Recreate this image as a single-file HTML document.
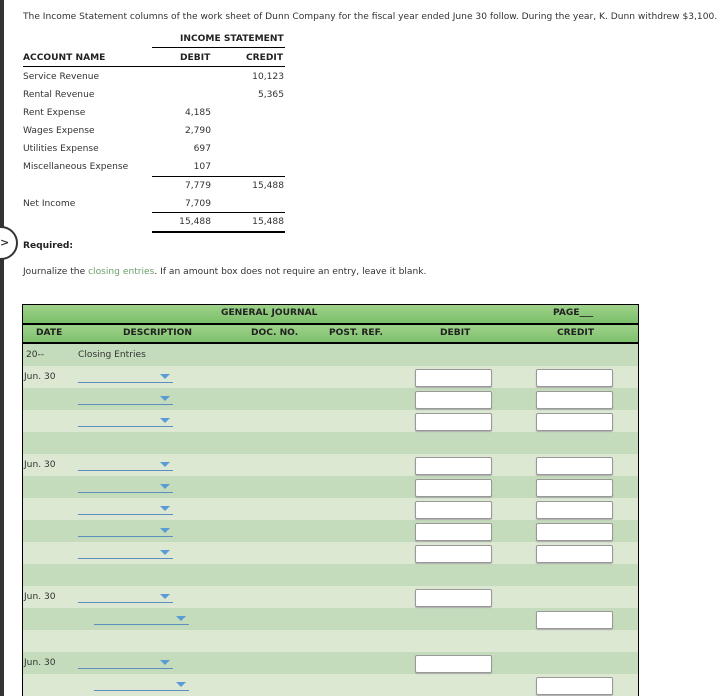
<!DOCTYPE html>
<html><head><meta charset="utf-8"><style>
*{margin:0;padding:0;box-sizing:border-box}
body{width:725px;height:696px;overflow:hidden;background:#fff;font-family:"DejaVu Sans","Liberation Sans",sans-serif;font-size:9.1px;color:#333;position:relative}
.a{position:absolute;white-space:nowrap}
.t{margin-top:2px}
.b{font-weight:bold;color:#222}
.r{text-align:right}
.ln{position:absolute;background:#000;height:1px}
.row{position:absolute;left:23px;width:615px;height:22px}
.dk{background:#c4dcbc}.lt{background:#dce8d2}
.inp{position:absolute;width:77px;height:18px;background:#fff;border:1px solid #999;border-radius:2px;box-shadow:0 1px 1px #aaa}
.dd{position:absolute;width:95px;height:12px;border-bottom:1px solid #5b8fc0}
.dd:after{content:"";position:absolute;right:3px;top:3px;border-left:5px solid transparent;border-right:5px solid transparent;border-top:5px solid #5b9bd5}
</style></head><body>
<div class="a" style="left:0;top:0;width:4px;height:696px;background:#333"></div>
<div class="a" style="left:-16px;top:226px;width:34px;height:34px;border:2px solid #333;border-radius:50%;background:#fff"></div>
<div class="a" style="left:0;top:236px;font-size:11px;color:#333;font-weight:bold">&gt;</div>

<div class="a" style="left:23px;top:12px">The Income Statement columns of the work sheet of Dunn Company for the fiscal year ended June 30 follow. During the year, K. Dunn withdrew $3,100.</div>
<div class="a b" style="left:180px;top:34px">INCOME STATEMENT</div>
<div class="ln" style="left:152px;top:47px;width:133px"></div>
<div class="a b" style="left:23px;top:53px">ACCOUNT NAME</div>
<div class="a b" style="left:180px;top:53px">DEBIT</div>
<div class="a b" style="left:246px;top:53px">CREDIT</div>
<div class="ln" style="left:23px;top:66px;width:262px"></div>
<div class="a" style="left:23px;top:72px">Service Revenue</div><div class="a r" style="left:218px;width:66px;top:72px">10,123</div>
<div class="a" style="left:23px;top:90px">Rental Revenue</div><div class="a r" style="left:218px;width:66px;top:90px">5,365</div>
<div class="a" style="left:23px;top:108px">Rent Expense</div><div class="a r" style="left:152px;width:59px;top:108px">4,185</div>
<div class="a" style="left:23px;top:126px">Wages Expense</div><div class="a r" style="left:152px;width:59px;top:126px">2,790</div>
<div class="a" style="left:23px;top:144px">Utilities Expense</div><div class="a r" style="left:152px;width:59px;top:144px">697</div>
<div class="a" style="left:23px;top:162px">Miscellaneous Expense</div><div class="a r" style="left:152px;width:59px;top:162px">107</div>
<div class="ln" style="left:152px;top:176px;width:133px"></div>
<div class="a r" style="left:152px;width:59px;top:181px">7,779</div><div class="a r" style="left:218px;width:66px;top:181px">15,488</div>
<div class="a" style="left:23px;top:199px">Net Income</div><div class="a r" style="left:152px;width:59px;top:199px">7,709</div>
<div class="ln" style="left:152px;top:212px;width:133px"></div>
<div class="a r" style="left:152px;width:59px;top:217px">15,488</div><div class="a r" style="left:218px;width:66px;top:217px">15,488</div>
<div class="ln" style="left:152px;top:231px;width:133px;height:2px"></div>

<div class="a b" style="left:23px;top:241px">Required:</div>
<div class="a" style="left:23px;top:267px">Journalize the <span style="color:#6a9f6a">closing entries</span>. If an amount box does not require an entry, leave it blank.</div>

<div class="a" style="left:22px;top:304px;width:617px;height:392px;border:1px solid #000;border-bottom:none"></div>
<div class="row" style="top:305px;height:18px;background:linear-gradient(#9ed28a,#7cc06a)"></div>
<div class="ln" style="left:23px;top:323px;width:615px;height:2px"></div>
<div class="row" style="top:325px;height:18px;background:linear-gradient(#9ed28a,#7cc06a)"></div>
<div class="ln" style="left:23px;top:342px;width:615px;height:2px"></div>
<div class="a b" style="left:221px;top:308px">GENERAL JOURNAL</div>
<div class="a b" style="left:553px;top:308px">PAGE___</div>
<div class="a b" style="left:36px;top:328px">DATE</div>
<div class="a b" style="left:123px;top:328px">DESCRIPTION</div>
<div class="a b" style="left:251px;top:328px">DOC. NO.</div>
<div class="a b" style="left:329px;top:328px">POST. REF.</div>
<div class="a b" style="left:440px;top:328px">DEBIT</div>
<div class="a b" style="left:557px;top:328px">CREDIT</div>

<div class="row dk" style="top:344px"></div>
<div class="row lt" style="top:366px"></div>
<div class="row dk" style="top:388px"></div>
<div class="row lt" style="top:410px"></div>
<div class="row dk" style="top:432px"></div>
<div class="row lt" style="top:454px"></div>
<div class="row dk" style="top:476px"></div>
<div class="row lt" style="top:498px"></div>
<div class="row dk" style="top:520px"></div>
<div class="row lt" style="top:542px"></div>
<div class="row dk" style="top:564px"></div>
<div class="row lt" style="top:586px"></div>
<div class="row dk" style="top:608px"></div>
<div class="row lt" style="top:630px"></div>
<div class="row dk" style="top:652px"></div>
<div class="row lt" style="top:674px"></div>

<div class="a" style="left:26px;top:350px">20--</div>
<div class="a" style="left:78px;top:350px">Closing Entries</div>

<div class="a" style="left:24px;top:372px">Jun. 30</div>
<div class="dd" style="left:78px;top:371px"></div>
<div class="dd" style="left:78px;top:393px"></div>
<div class="dd" style="left:78px;top:415px"></div>
<div class="inp" style="left:415px;top:369px"></div><div class="inp" style="left:536px;top:369px"></div>
<div class="inp" style="left:415px;top:391px"></div><div class="inp" style="left:536px;top:391px"></div>
<div class="inp" style="left:415px;top:413px"></div><div class="inp" style="left:536px;top:413px"></div>

<div class="a" style="left:24px;top:460px">Jun. 30</div>
<div class="dd" style="left:78px;top:459px"></div>
<div class="dd" style="left:78px;top:481px"></div>
<div class="dd" style="left:78px;top:503px"></div>
<div class="dd" style="left:78px;top:525px"></div>
<div class="dd" style="left:78px;top:547px"></div>
<div class="inp" style="left:415px;top:457px"></div><div class="inp" style="left:536px;top:457px"></div>
<div class="inp" style="left:415px;top:479px"></div><div class="inp" style="left:536px;top:479px"></div>
<div class="inp" style="left:415px;top:501px"></div><div class="inp" style="left:536px;top:501px"></div>
<div class="inp" style="left:415px;top:523px"></div><div class="inp" style="left:536px;top:523px"></div>
<div class="inp" style="left:415px;top:545px"></div><div class="inp" style="left:536px;top:545px"></div>

<div class="a" style="left:24px;top:592px">Jun. 30</div>
<div class="dd" style="left:78px;top:591px"></div>
<div class="dd" style="left:94px;top:613px"></div>
<div class="inp" style="left:415px;top:589px"></div>
<div class="inp" style="left:536px;top:611px"></div>

<div class="a" style="left:24px;top:658px">Jun. 30</div>
<div class="dd" style="left:78px;top:657px"></div>
<div class="dd" style="left:94px;top:679px"></div>
<div class="inp" style="left:415px;top:655px"></div>
<div class="inp" style="left:536px;top:677px"></div>
</body></html>
